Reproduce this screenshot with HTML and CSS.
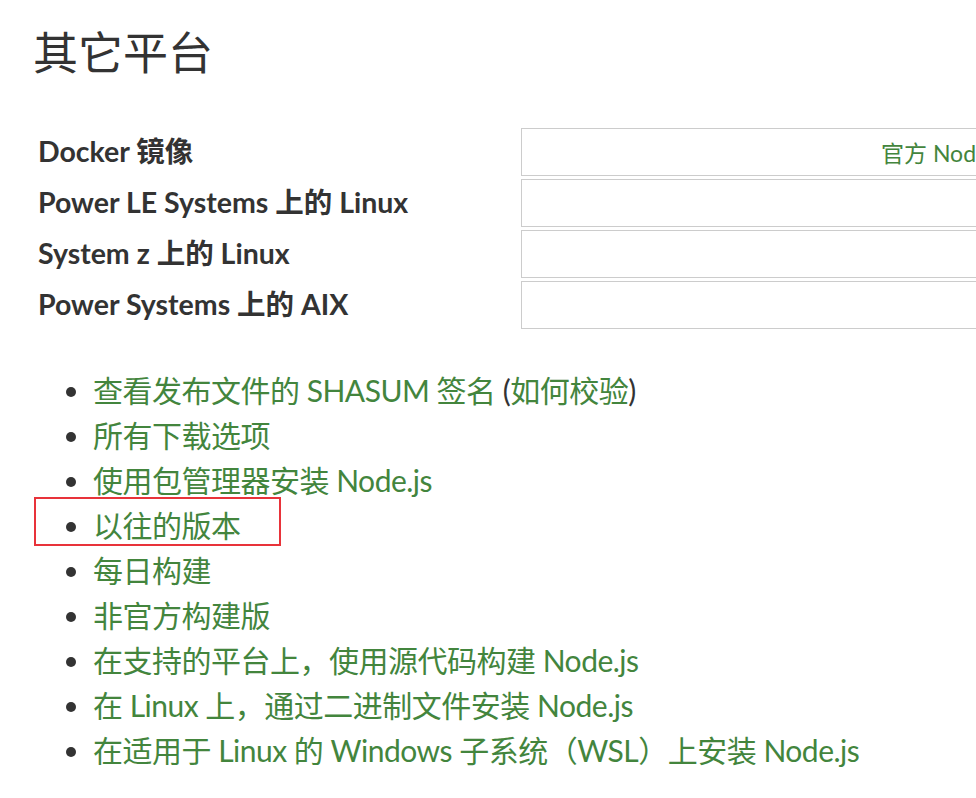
FILE: index.html
```html
<!DOCTYPE html>
<html lang="zh-CN">
<head>
<meta charset="utf-8">
<title>其它平台</title>
<link rel="stylesheet" href="styles.css">
</head>
<body>
<main class="page">
  <h1 class="title">其它平台</h1>
  <div class="platforms">
    <div class="label">Docker 镜像</div>
    <div class="cell"><a class="cell-link" href="#">官方 Node.js 镜像</a></div>
    <div class="label">Power LE Systems 上的 Linux</div>
    <div class="cell"></div>
    <div class="label">System z 上的 Linux</div>
    <div class="cell"></div>
    <div class="label">Power Systems 上的 AIX</div>
    <div class="cell"></div>
  </div>
  <ul class="links">
    <li><a href="#">查看发布文件的 SHASUM 签名</a> <span class="paren">(</span><a href="#">如何校验</a><span class="paren">)</span></li>
    <li><a href="#">所有下载选项</a></li>
    <li><a href="#">使用包管理器安装 Node.js</a></li>
    <li class="marked"><a href="#">以往的版本</a><span class="highlight"></span></li>
    <li><a href="#">每日构建</a></li>
    <li><a href="#">非官方构建版</a></li>
    <li><a href="#">在支持的平台上，使用源代码构建 Node.js</a></li>
    <li><a href="#">在 Linux 上，通过二进制文件安装 Node.js</a></li>
    <li><a href="#">在适用于 Linux 的 Windows 子系统（WSL）上安装 Node.js</a></li>
  </ul>
</main>
</body>
</html>
```

FILE: styles.css
```css
html, body {
  margin: 0;
  padding: 0;
  background: #fff;
  overflow: hidden;
}
body {
  font-family: Lato, "Noto Sans CJK SC", sans-serif;
  color: #333;
}
.page {
  padding-left: 33px;
  width: 1400px;
}
.title {
  margin: 20px 0 0 0;
  font-size: 45px;
  font-weight: 400;
  line-height: 1.5;
  color: #333;
}
.platforms {
  margin-top: 40px;
  display: grid;
  grid-template-columns: 483px 700px;
  row-gap: 3px;
  padding-left: 5px;
}
.label {
  font-size: 28.5px;
  font-weight: 700;
  height: 44px;
  padding-bottom: 4px;
  display: flex;
  align-items: center;
  color: #333;
  white-space: nowrap;
}
.cell {
  height: 46px;
  border: 1px solid #ccc;
  display: flex;
  align-items: center;
  padding-left: 359px;
}
.cell-link {
  font-size: 23px;
  color: #43853d;
  text-decoration: none;
  white-space: nowrap;
}
.links {
  margin: 39px 0 0 0;
  padding-left: 60px;
  font-size: 30px;
  line-height: 45px;
  letter-spacing: -0.5px;
  color: #333;
}
.links a {
  color: #43853d;
  text-decoration: none;
}
.paren {
  color: #333;
}
.marked {
  position: relative;
}
.highlight {
  position: absolute;
  left: -59px;
  top: -6px;
  width: 243px;
  height: 45px;
  border: 2px solid #e8333a;
  pointer-events: none;
}
```
